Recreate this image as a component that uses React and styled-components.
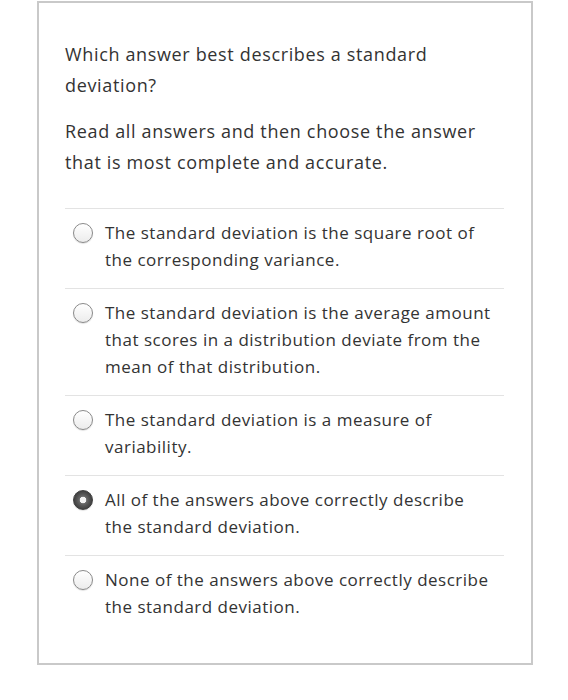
import React from "react";
import styled, { createGlobalStyle } from "styled-components";

const Global = createGlobalStyle`
  html, body { margin: 0; padding: 0; background: #ffffff; }
  body { font-family: "Open Sans", "Lato", sans-serif; color: #333333; }
`;

const Card = styled.div`
  box-sizing: border-box;
  margin: 1px 0 0 37px;
  width: 496px;
  height: 664px;
  border: 2px solid #c9c9c9;
  padding: 36px 27px 0 26px;
`;

const Para = styled.p`
  margin: 0 0 15px;
  font-size: 18px;
  line-height: 31px;
  color: #333333;
  letter-spacing: 0.65px;
`;

const Options = styled.div`
  margin-top: 30px;
`;

const Option = styled.label`
  display: flex;
  align-items: flex-start;
  gap: 12px;
  border-top: 1px solid #e3e3e3;
  padding: 10px 0 15px 8px;
`;

const Radio = styled.span`
  flex: none;
  box-sizing: border-box;
  width: 20px;
  height: 20px;
  margin-top: 3.5px;
  border-radius: 50%;
  border: 1.5px solid ${(p) => (p.$checked ? "#3e3e3e" : "#8a8a8a")};
  background: ${(p) =>
    p.$checked
      ? "radial-gradient(circle, #f2f2f2 0 3px, #6a6a6a 3.6px, #555 6px, #3a3a3a 10px)"
      : "linear-gradient(#ffffff, #ececec)"};
  box-shadow: 0 1px 1px rgba(0, 0, 0, 0.12);
`;

const OptionText = styled.span`
  max-width: 387px;
  font-size: 17px;
  line-height: 27px;
  color: #333333;
  letter-spacing: 0.5px;
`;

const answers = [
  "The standard deviation is the square root of the corresponding variance.",
  "The standard deviation is the average amount that scores in a distribution deviate from the mean of that distribution.",
  "The standard deviation is a measure of variability.",
  "All of the answers above correctly describe the standard deviation.",
  "None of the answers above correctly describe the standard deviation.",
];

export default function App() {
  return (
    <>
      <Global />
      <Card>
        <Para>Which answer best describes a standard deviation?</Para>
        <Para>
          Read all answers and then choose the answer that is most complete and
          accurate.
        </Para>
        <Options>
          {answers.map((a, i) => (
            <Option key={i}>
              <Radio $checked={i === 3} />
              <OptionText>{a}</OptionText>
            </Option>
          ))}
        </Options>
      </Card>
    </>
  );
}
